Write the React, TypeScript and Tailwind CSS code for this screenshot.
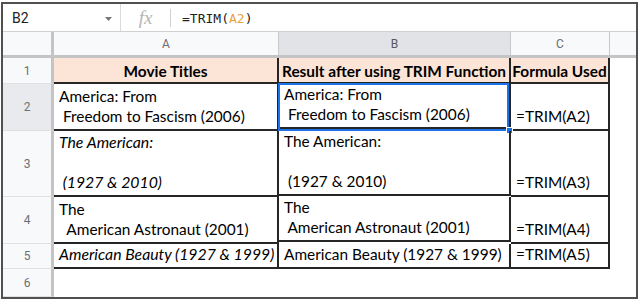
const cellFont = { fontFamily: "Lato, 'Open Sans', sans-serif" };

type Cell = { text: string; italic?: boolean };

const rows: { h: string; a: Cell; b: Cell; c: Cell }[] = [
  { h: "h-[47px]", a: { text: "America: From\n Freedom to Fascism (2006)" }, b: { text: "America: From\n Freedom to Fascism (2006)" }, c: { text: "=TRIM(A2)" } },
  { h: "h-[66px]", a: { text: "The American:\n\n (1927 & 2010)", italic: true }, b: { text: "The American:\n\n (1927 & 2010)" }, c: { text: "=TRIM(A3)" } },
  { h: "h-[47px]", a: { text: "The\n  American Astronaut (2001)" }, b: { text: "The\n American Astronaut (2001)" }, c: { text: "=TRIM(A4)" } },
  { h: "h-[25px]", a: { text: "American Beauty (1927 & 1999)", italic: true }, b: { text: "American Beauty (1927 & 1999)" }, c: { text: "=TRIM(A5)" } },
];

function RowHead({ n, selected }: { n: number; selected?: boolean }) {
  return (
    <div
      className={`w-[51px] shrink-0 flex items-center justify-center border-r-[3px] border-r-[#c4c4c4] border-b border-b-[#e0e0e0] text-[12px] text-[#6b6f74] ${selected ? "bg-[#e8eaed]" : "bg-[#f8f9fa]"}`}
      style={{ fontFamily: "Roboto, 'Open Sans', sans-serif" }}
    >
      {n}
    </div>
  );
}

function DataCell({ cell, w }: { cell: Cell; w: string }) {
  return (
    <div
      className={`${w} shrink-0 flex flex-col justify-end px-[5px] pb-[3px] border-r-2 border-b-2 border-[#262626] leading-[20px] text-black whitespace-pre overflow-hidden ${cell.italic ? "italic text-[15.8px]" : "text-[15.4px]"}`}
      style={cellFont}
    >
      {cell.text}
    </div>
  );
}

export default function App() {
  return (
    <div className="w-[640px] h-[301px] bg-white pt-[2px] pl-[1px]">
      <div className="w-[637px] h-[297px] border-2 border-[#505050] overflow-hidden flex flex-col">
        {/* Formula bar */}
        <div className="h-[28px] shrink-0 flex border-b border-[#d0d0d0]">
          <div className="w-[117px] flex items-center justify-between pl-[9px] pr-[8px] pt-[2px]">
            <span className="text-[14px] text-[#222]" style={{ fontFamily: "Roboto, sans-serif" }}>B2</span>
            <svg width="7" height="4" viewBox="0 0 7 4">
              <path d="M0 0 L7 0 L3.5 4 Z" fill="#777" />
            </svg>
          </div>
          <div className="w-px bg-[#dadada]" />
          <div className="w-[49px] flex items-center justify-center pt-[1px]">
            <span className="italic text-[19px] text-[#b5b5b5]" style={{ fontFamily: "'Liberation Serif', serif" }}>fx</span>
          </div>
          <div className="flex items-center">
            <div className="w-px h-[18px] bg-[#d0d0d0]" />
          </div>
          <div className="flex items-center pl-[11px] pt-[2px] text-[13px] text-[#222]" style={{ fontFamily: "'DejaVu Sans Mono', monospace" }}>
            =TRIM(<span className="text-[#e8a33d]">A2</span>)
          </div>
        </div>

        {/* Column headers */}
        <div className="h-[26px] shrink-0 flex border-b-[3px] border-[#c4c4c4] text-[12px] text-[#6b6f74]" style={{ fontFamily: "Roboto, sans-serif" }}>
          <div className="w-[51px] shrink-0 bg-[#f8f9fa] border-r-[3px] border-[#c4c4c4]" />
          <div className="w-[225px] shrink-0 bg-[#f8f9fa] border-r border-[#c8c8c8] flex items-center justify-center">A</div>
          <div className="w-[232px] shrink-0 bg-[#e1e3e6] border-r border-[#c8c8c8] flex items-center justify-center text-[#55595e]">B</div>
          <div className="w-[99px] shrink-0 bg-[#f8f9fa] border-r border-[#c8c8c8] flex items-center justify-center">C</div>
          <div className="flex-1 bg-[#f8f9fa]" />
        </div>

        {/* Row 1 */}
        <div className="h-[26px] shrink-0 flex">
          <RowHead n={1} />
          {[
            { t: "Movie Titles", w: "w-[225px]" },
            { t: "Result after using TRIM Function", w: "w-[232px]" },
            { t: "Formula Used", w: "w-[99px]" },
          ].map((c) => (
            <div
              key={c.t}
              className={`${c.w} shrink-0 flex items-end justify-center pb-[1px] bg-[#fce4d6] border-r-2 border-b-2 border-[#262626] text-[15.4px] leading-[20px] font-bold text-black whitespace-nowrap overflow-hidden`}
              style={cellFont}
            >
              {c.t}
            </div>
          ))}
          <div className="flex-1" />
        </div>

        {/* Rows 2-5 */}
        {rows.map((r, i) => (
          <div key={i} className={`${r.h} shrink-0 flex`}>
            <RowHead n={i + 2} selected={i === 0} />
            <DataCell cell={r.a} w="w-[225px]" />
            <div className="relative">
              <DataCell cell={r.b} w="w-[232px]" />
              {i === 0 && (
                <>
                  <div className="absolute left-[-1px] top-[-1px] right-[2px] bottom-[0px] border-2 border-[#1a73e8]" />
                  <div className="absolute right-[-2px] bottom-[-3px] w-[7px] h-[7px] bg-[#1a73e8] border border-white" />
                </>
              )}
            </div>
            <DataCell cell={r.c} w="w-[99px]" />
            <div className="flex-1" />
          </div>
        ))}

        {/* Row 6 */}
        <div className="flex-1 flex">
          <RowHead n={6} />
          <div className="flex-1" />
        </div>
      </div>
    </div>
  );
}
